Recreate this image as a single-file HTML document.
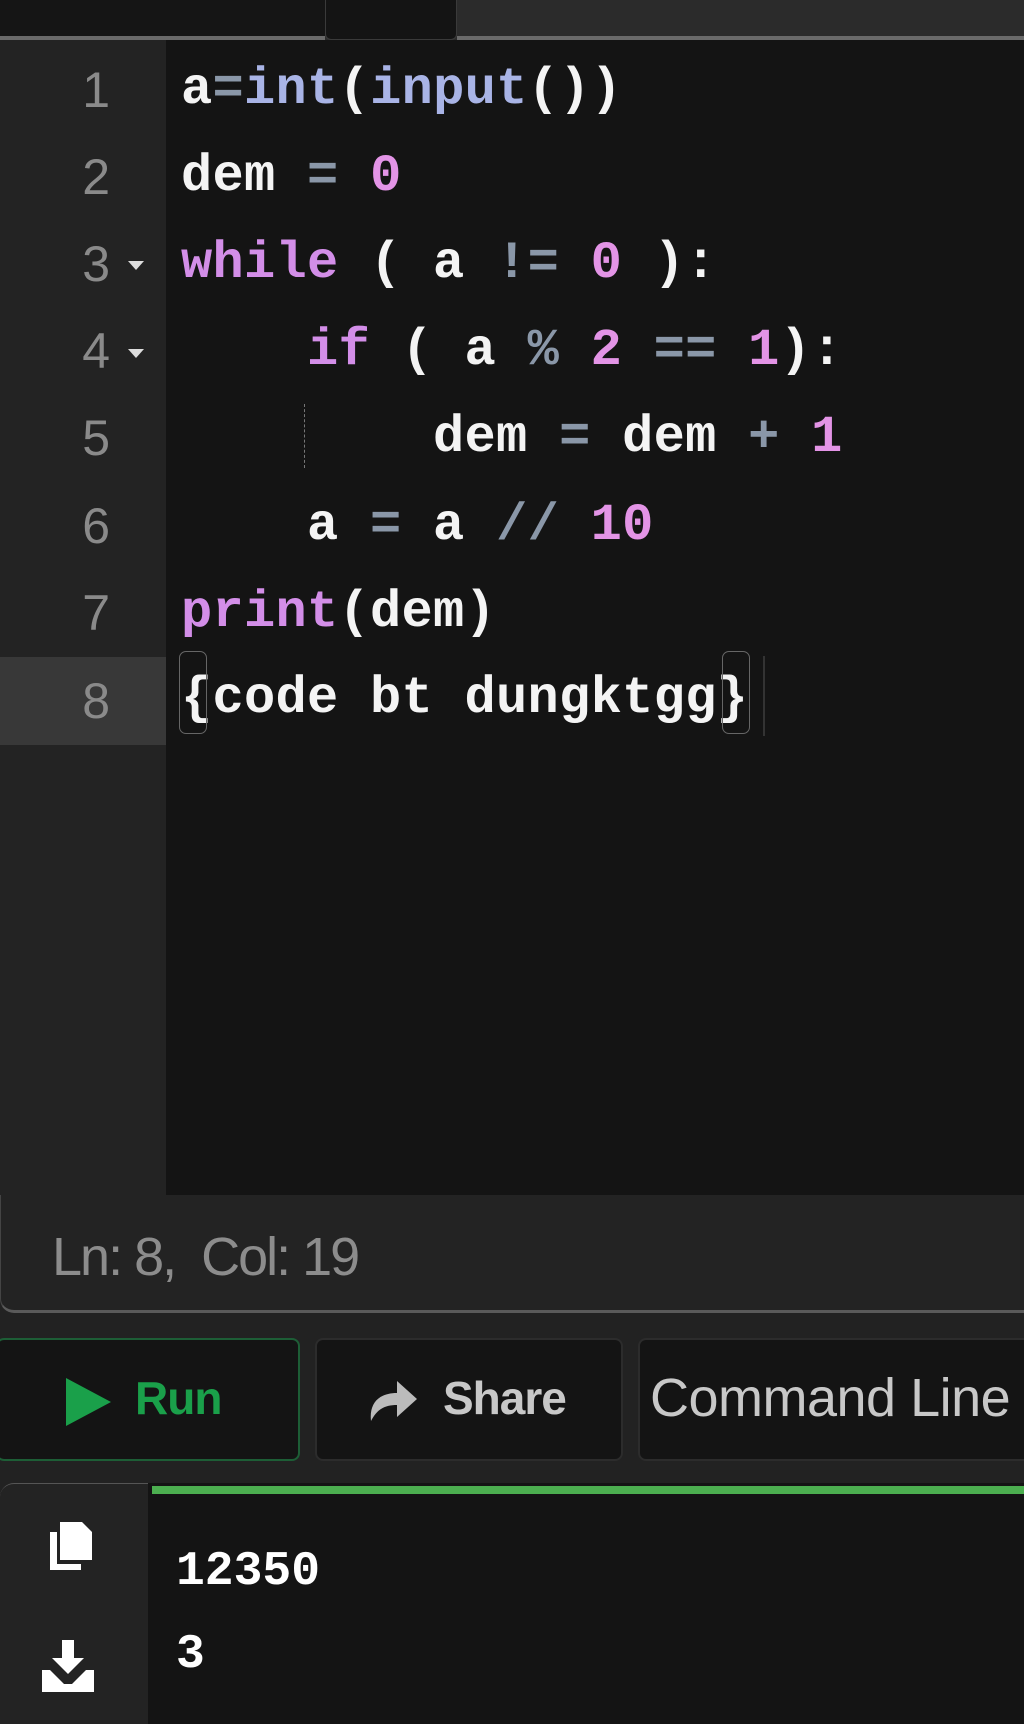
<!DOCTYPE html>
<html><head><meta charset="utf-8"><style>
*{margin:0;padding:0;box-sizing:border-box}
body{width:1024px;height:1724px;background:#222;position:relative;overflow:hidden;font-family:"DejaVu Sans Mono",monospace}
.abs{position:absolute}
.ln{position:absolute;left:0;width:165px;text-align:right;padding-right:55px;color:#8a8a8a;font-size:50px;line-height:88px;font-family:"Liberation Sans",sans-serif}
.cl{position:absolute;left:181px;font-size:52px;line-height:88px;color:#f4f4f4;white-space:pre;font-family:"Liberation Mono",monospace;font-weight:bold;letter-spacing:0.3px}
.k{color:#d38ee8}.b{color:#a9b4e6}.n{color:#e394e6}.o{color:#8a97a8}
.fold{position:absolute;left:128px;width:0;height:0;border-left:8px solid transparent;border-right:8px solid transparent;border-top:9px solid #ddd}
</style></head><body>
<div class="abs" style="left:0;top:0;width:1024px;height:40px;background:#2b2b2b"></div>
<div class="abs" style="left:0;top:0;width:325px;height:36px;background:#151515"></div>
<div class="abs" style="left:325px;top:0;width:132px;height:40px;background:#141414;border:1px solid #3a3a3a;border-top:none;border-radius:0 0 6px 6px"></div>
<div class="abs" style="left:0;top:36px;width:325px;height:4px;background:#6a6a6a"></div>
<div class="abs" style="left:457px;top:36px;width:567px;height:4px;background:#6a6a6a"></div>
<div class="abs" style="left:0;top:40px;width:166px;height:1155px;background:#232323"></div>
<div class="abs" style="left:166px;top:40px;width:858px;height:1155px;background:#141414"></div>
<div class="abs" style="left:0;top:657px;width:166px;height:88px;background:#383838"></div>
<div class="abs" style="left:304px;top:404px;width:0;height:64px;border-left:1px dashed #777"></div>

<div class="ln" style="top:46px">1</div>
<div class="ln" style="top:133px">2</div>
<div class="ln" style="top:220px">3</div>
<div class="ln" style="top:307px">4</div>
<div class="ln" style="top:394px">5</div>
<div class="ln" style="top:482px">6</div>
<div class="ln" style="top:569px">7</div>
<div class="ln" style="top:657px">8</div>
<div class="fold" style="top:261px"></div>
<div class="fold" style="top:349px"></div>

<div class="cl" style="top:46px">a<span class="o">=</span><span class="b">int</span>(<span class="b">input</span>())</div>
<div class="cl" style="top:133px">dem <span class="o">=</span> <span class="n">0</span></div>
<div class="cl" style="top:220px"><span class="k">while</span> ( a <span class="o">!=</span> <span class="n">0</span> ):</div>
<div class="cl" style="top:307px">    <span class="k">if</span> ( a <span class="o">%</span> <span class="n">2</span> <span class="o">==</span> <span class="n">1</span>):</div>
<div class="cl" style="top:394px">        dem <span class="o">=</span> dem <span class="o">+</span> <span class="n">1</span></div>
<div class="cl" style="top:482px">    a <span class="o">=</span> a <span class="o">//</span> <span class="n">10</span></div>
<div class="cl" style="top:569px"><span class="k">print</span>(dem)</div>
<div class="cl" style="top:655px">{code bt dungktgg}</div>
<div class="abs" style="left:179px;top:651px;width:28px;height:83px;border:1px solid #666;border-radius:7px"></div>
<div class="abs" style="left:722px;top:651px;width:28px;height:83px;border:1px solid #666;border-radius:7px"></div>
<div class="abs" style="left:763px;top:656px;width:2px;height:80px;background:#333"></div>

<div class="abs" style="left:0;top:1195px;width:1030px;height:118px;background:#232323;border-bottom:3px solid #5a5a5a;border-left:1px solid #444;border-radius:0 0 0 14px"></div>
<div class="abs" style="left:52px;top:1226px;font-family:'Liberation Sans',sans-serif;font-size:54px;color:#8c8c8c;letter-spacing:-2px">Ln: 8,&nbsp; Col: 19</div>

<div class="abs" style="left:-4px;top:1338px;width:304px;height:123px;background:#141414;border:2px solid #1d5e36;border-radius:8px"></div>
<div class="abs" style="left:66px;top:1378px;width:0;height:0;border-top:24px solid transparent;border-bottom:24px solid transparent;border-left:45px solid #1aa04a"></div>
<div class="abs" style="left:135px;top:1371px;font-family:'Liberation Sans',sans-serif;font-weight:bold;font-size:46px;color:#1aa04a;letter-spacing:-1px">Run</div>
<div class="abs" style="left:315px;top:1338px;width:308px;height:123px;background:#141414;border:2px solid #2c2c2c;border-radius:8px"></div>
<svg class="abs" style="left:365px;top:1375px" width="54" height="48" viewBox="0 0 54 48"><path d="M6 46 C4 28 14 18 32 18 L32 6 L52 24 L32 42 L32 30 C20 30 12 34 6 46Z" fill="#bbb"/></svg>
<div class="abs" style="left:443px;top:1371px;font-family:'Liberation Sans',sans-serif;font-weight:bold;font-size:46px;color:#c8c8c8;letter-spacing:-1px">Share</div>
<div class="abs" style="left:638px;top:1338px;width:400px;height:123px;background:#141414;border:2px solid #2c2c2c;border-radius:8px"></div>
<div class="abs" style="left:650px;top:1367px;font-family:'Liberation Sans',sans-serif;font-size:54px;color:#c8c8c8;letter-spacing:-0.5px">Command Line</div>

<div class="abs" style="left:0;top:1483px;width:148px;height:241px;background:#232323;border-top:1px solid #555;border-radius:14px 0 0 0"></div>
<div class="abs" style="left:148px;top:1483px;width:876px;height:241px;background:#141414"></div>
<div class="abs" style="left:152px;top:1486px;width:872px;height:8px;background:#4caf50"></div>
<svg class="abs" style="left:48px;top:1520px" width="50" height="52" viewBox="0 0 50 52"><path d="M12 2 H34 L44 12 V40 H12Z" fill="#fff"/><path d="M2 12 H9 V44 H33 V50 H2Z" fill="#fff"/></svg>
<svg class="abs" style="left:40px;top:1640px" width="56" height="56" viewBox="0 0 56 56"><path d="M22 0 H34 V18 H44 L28 34 L12 18 H22Z" fill="#fff"/><path d="M2 30 H10 L24 44 H32 L46 30 H54 V52 H2Z" fill="#fff"/></svg>
<div class="abs" style="left:176px;top:1542px;font-size:48px;color:#fff;line-height:60px;font-family:'Liberation Mono',monospace;font-weight:bold">12350</div>
<div class="abs" style="left:176px;top:1625px;font-size:48px;color:#fff;line-height:60px;font-family:'Liberation Mono',monospace;font-weight:bold">3</div>
</body></html>
